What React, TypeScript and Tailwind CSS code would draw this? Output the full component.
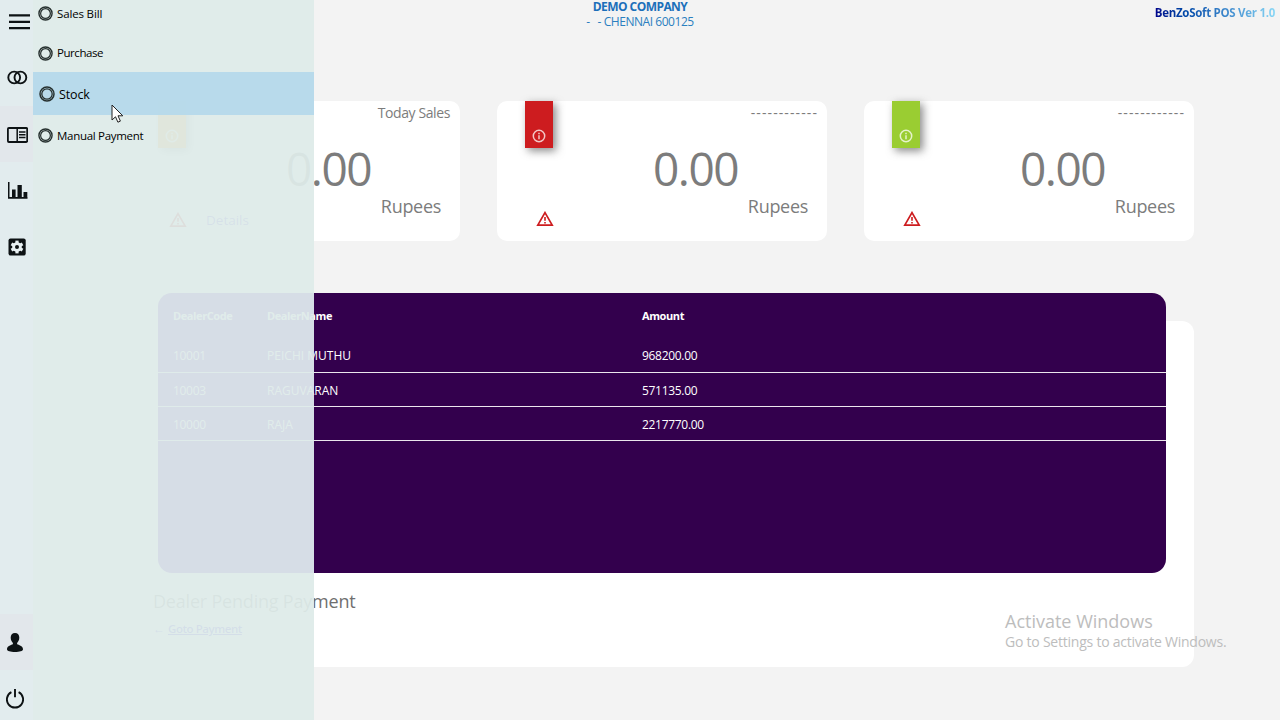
import clsx from "clsx";

const cards = [
    { title: "Today Sales", tag: "bg-[#ff9a1f]", details: "Details" },
    { title: "------------", tag: "bg-[#cd1c1f]", details: "" },
    { title: "------------", tag: "bg-[#9acd32]", details: "" },
];

const dealers = [
    { code: "10001", name: "PEICHI MUTHU", amount: "968200.00" },
    { code: "10003", name: "RAGUVARAN", amount: "571135.00" },
    { code: "10000", name: "RAJA", amount: "2217770.00" },
];

const Ring = ({ size }: { size: number }) => (
    <svg width={size} height={size} viewBox="0 0 16 16" fill="none" stroke="#26302f" className="shrink-0">
        <circle cx="8" cy="8" r="7" strokeWidth="1.5" />
        <circle cx="8" cy="8" r="5.2" strokeWidth="1.3" />
    </svg>
);

const InfoIcon = () => (
    <svg width="14" height="14" viewBox="0 0 14 14" fill="none" stroke="currentColor">
        <circle cx="7" cy="7" r="5.7" strokeWidth="1.5" />
        <path d="M7 6.200v4M7 3.700v1.500" strokeWidth="1.5" />
    </svg>
);

const WarningIcon = () => (
    <svg width="18" height="16" viewBox="0 0 18 16" fill="none" stroke="#cd1c1f">
        <path d="M9 1.600L16.200 14.200H1.800z" strokeWidth="1.700" />
        <path d="M9 6v3.800M9 11v1.500" strokeWidth="1.600" />
    </svg>
);

const Rail = () => (
    <nav className="w-[33px] h-full flex flex-col bg-[#e2ecee] text-[#0d1214]">
        <div className="h-[50px] pl-[9px] pt-[14px]">
            <svg width="21" height="16" viewBox="0 0 21 16" fill="currentColor">
                <path d="M0 0.300h21v2.200H0zM0 6.800h21v2.200H0zM0 13h21v2.200H0z" />
            </svg>
        </div>
        <div className="h-14 flex items-center pl-[7px]">
            <svg width="21" height="16" viewBox="0 0 21 16" fill="none" stroke="currentColor" strokeWidth="1.9">
                <circle cx="7.2" cy="7.5" r="5.9" />
                <circle cx="13.4" cy="7.5" r="5.9" />
            </svg>
        </div>
        <div className="h-14 flex items-center pl-[7px] pt-px bg-[#e2e7eb]">
            <svg width="21" height="16" viewBox="0 0 21 16" fill="none" stroke="currentColor" strokeWidth="1.8">
                <rect x="0.9" y="1" width="19.3" height="14" rx="1" />
                <path d="M10.2 1v14M12 5h6.500M12 7.800h6.500M12 10.600h6.500" strokeWidth="1.5" />
            </svg>
        </div>
        <div className="h-14 flex items-center pl-[8px]">
            <svg width="20" height="17" viewBox="0 0 20 17" fill="currentColor">
                <path d="M0 0h1.500v15H19.500v1.700H0zM4 7.500h3.600V15H4zM9.500 3h4.300v12H9.500zM15.500 10h3.800v5h-3.800z" />
            </svg>
        </div>
        <div className="h-14 flex items-center pl-[8px] pt-px">
            <svg width="18" height="18" viewBox="0 0 18 18">
                <rect x="0.5" y="0.5" width="17.2" height="17" rx="2" fill="currentColor" />
                <g fill="#e8f0f2">
                    <circle cx="9" cy="9" r="4.8" />
                    <path d="M7.400 2.600h3.200v12.800H7.400z" />
                    <path d="M7.400 2.600h3.200v12.800H7.400z" transform="rotate(60 9 9)" />
                    <path d="M7.400 2.600h3.200v12.800H7.400z" transform="rotate(120 9 9)" />
                </g>
                <circle cx="9" cy="9" r="2" fill="currentColor" />
            </svg>
        </div>
        <div className="mt-auto h-14 flex items-center pl-[7px] bg-[#e2e7eb]">
            <svg width="16" height="19" viewBox="0 0 16 19" fill="currentColor">
                <path d="M8 0C5.200 0 3.700 1.900 3.700 4.600c0 2.500.8 4 2.200 5.400v1.200C3.500 12.200 0 13 0 16.200 0 18.200 3.500 18.900 8 18.900s8-.7 8-2.700c0-3.200-3.500-4-5.900-5V10c1.400-1.400 2.200-2.900 2.200-5.400C12.300 1.900 10.800 0 8 0z" />
            </svg>
        </div>
        <div className="h-[50px] pl-[6px] pt-[19px]">
            <svg width="18" height="20" viewBox="0 0 18 20" fill="none" stroke="currentColor" strokeWidth="1.9">
                <path d="M5.400 3.200A8.100 8.100 0 1 0 12.600 3.200M9 0v8.300" />
            </svg>
        </div>
    </nav>
);

const Menu = () => (
    <ul className="w-[281px] h-full bg-[#deebe9]/94 text-[11.500px] font-medium text-black tracking-[-0.300px]">
        <li className="h-[27px] flex items-center gap-[4px] pl-[5px]">
            <Ring size={15} />
            <span className="mt-px tracking-[-0.150px]">Sales Bill</span>
        </li>
        <li className="h-[45px] pt-[7px] flex items-center gap-[4px] pl-[5px]">
            <Ring size={15} />
            <span className="-mt-px tracking-[-0.450px]">Purchase</span>
        </li>
        <li className="h-[43px] flex items-center gap-[4px] pl-[6px] pt-px bg-[#b7d9ea]/97">
            <Ring size={16} />
            <span className="mt-[3px] text-[12.500px] tracking-[-0.150px]">Stock</span>
        </li>
        <li className="h-[41px] flex items-center gap-[4px] pl-[5px]">
            <Ring size={15} />
            <span>Manual Payment</span>
        </li>
    </ul>
);

const SummaryCard = ({ title, tag, details }: (typeof cards)[number]) => (
    <div className="w-[330px] h-[140px] bg-white rounded-[10px] flex justify-between text-[#7c7c7c]">
        <div className="pl-[28px]">
            <div className={clsx("w-[28px] h-[47px] flex items-end justify-center pb-[5px] text-white/75 shadow-[3px_3px_9px_rgba(60,60,60,0.6)]", tag)}>
                <InfoIcon />
            </div>
            <div className="mt-[63px] ml-[11px] flex items-center gap-[19px]">
                <WarningIcon />
                <span className="text-[13.500px] leading-[18px] text-[#5b3bd4]">{details}</span>
            </div>
        </div>
        <div className="flex flex-col items-end">
            <span
                className={clsx(
                    "mt-[2px] text-[14px] leading-[20px]",
                    title.startsWith("-") ? "mr-[9px] tracking-[1.100px]" : "mr-[10px] tracking-[-0.400px]",
                )}
            >
                {title}
            </span>
            <span className="mt-[20px] mr-[89px] text-[46px] leading-[50px] tracking-[-1.500px]">0.00</span>
            <span className="mt-px mr-[19px] text-[18px] leading-[24px] tracking-[-0.300px]">Rupees</span>
        </div>
    </div>
);

const App = () => {
    return (
        <div className="relative w-[1280px] h-[720px] overflow-hidden bg-[#f3f3f3] font-['Open_Sans','Noto_Sans',sans-serif]">
            <header className="h-[101px] grid grid-cols-3">
                <div />
                <div className="text-center text-[#2b7fc0]">
                    <h1 className="text-[12px] leading-[14px] font-bold tracking-[-0.550px] text-[#1b6fba]">DEMO COMPANY</h1>
                    <p className="text-[12px] leading-[16px] tracking-[-0.450px] whitespace-pre">-   - CHENNAI 600125</p>
                </div>
                <div className="pt-[5px] pr-[5px] text-right">
                    <span className="block w-fit ml-auto text-[11.500px] leading-[16px] font-bold tracking-[-0.290px] bg-linear-to-r from-[#00008b] to-[#87d6f5] bg-clip-text text-transparent">
                        BenZoSoft POS Ver 1.0
                    </span>
                </div>
            </header>

            <main className="ml-[130px] w-[1064px]">
                <section className="flex justify-between">
                    {cards.map((card, i) => (
                        <SummaryCard key={i} {...card} />
                    ))}
                </section>

                <section className="mt-[80px] h-[346px] bg-white rounded-[12px] px-[28px]">
                    <div className="relative -top-[28px] h-[280px] bg-[linear-gradient(to_right,#5800b7_156px,#33004d_156px)] rounded-[14px] overflow-hidden text-white text-[12px]">
                        <div className="h-[46px] grid grid-cols-[94px_375px_1fr] items-center pl-[15px] text-[11px] font-bold tracking-[-0.400px]">
                            <span>DealerCode</span>
                            <span>DealerName</span>
                            <span>Amount</span>
                        </div>
                        {dealers.map((d, i) => (
                            <div
                                key={d.code}
                                className={clsx(
                                    "h-[34px] grid grid-cols-[94px_375px_1fr] items-center pl-[15px] border-b border-white/90 tracking-[-0.300px]",
                                    i === 0 ? "pt-px" : "pt-[3px]",
                                )}
                            >
                                <span>{d.code}</span>
                                <span className="tracking-[0.020px]">{d.name}</span>
                                <span>{d.amount}</span>
                            </div>
                        ))}
                    </div>
                    <div className="-ml-[5px] -mt-[13px]">
                        <h2 className="text-[18px] leading-[26px] tracking-[-0.200px] text-[#6f6f6f]">Dealer Pending Payment</h2>
                        <p className="mt-[6px] flex items-center gap-[3px] text-[12px] leading-[18px] text-[#3b1bd4]">
                            <span>&larr;</span>
                            <span className="underline font-semibold text-[11.500px] tracking-[-0.450px]">Goto Payment</span>
                        </p>
                    </div>
                </section>
            </main>

            <div className="absolute left-[1005px] top-[609px] text-[#bdbdbd] whitespace-nowrap">
                <p className="text-[18px] leading-[24px]">Activate Windows</p>
                <p className="text-[14px] leading-[18px] tracking-[-0.230px]">Go to Settings to activate Windows.</p>
            </div>

            <aside className="absolute left-0 top-0 h-full flex">
                <Rail />
                <Menu />
            </aside>

            <svg className="absolute left-[111px] top-[104px]" width="13" height="19" viewBox="0 0 13 19">
                <path d="M1 1v15l3.500-3.200 2.400 5.400 2.500-1.100L7 11.800h4.800z" fill="#fff" stroke="#222" strokeWidth="1" />
            </svg>
        </div>
    );
};

export default App;
